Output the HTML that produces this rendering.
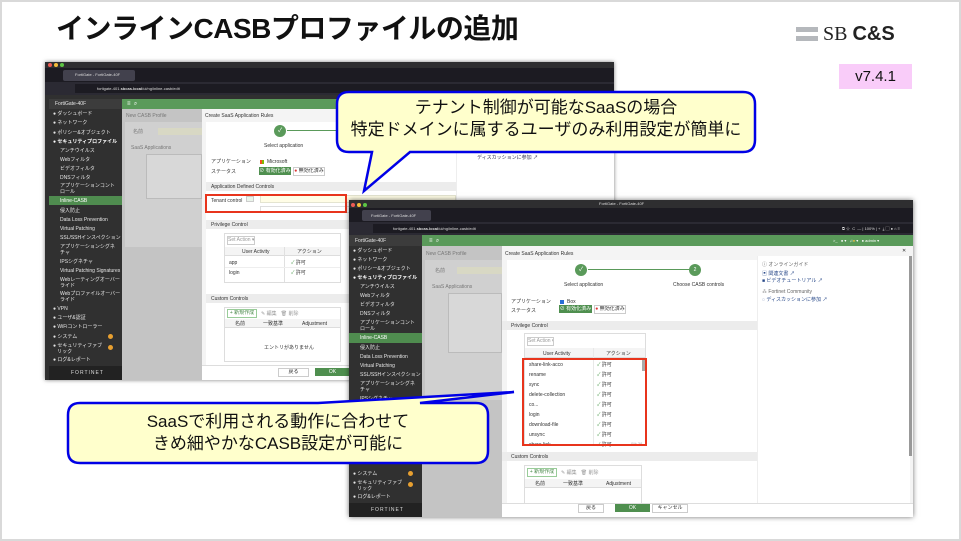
<!DOCTYPE html>
<html><head><meta charset="utf-8"><style>
*{margin:0;padding:0;box-sizing:border-box}
body{width:961px;height:541px;overflow:hidden;background:#fff;font-family:"Liberation Sans","Noto Sans CJK JP",sans-serif;position:relative}
.a{position:absolute}
.t{position:absolute;font-size:5px;line-height:6px;white-space:nowrap;color:#333}
.w{color:#ddd}
.sb .t{color:#e6e6e6}
.sec{position:absolute;background:#ececec}
.bx{position:absolute;border:1px solid #ddd;background:#fff}
.gbtn{position:absolute;background:#4f8f4f;color:#fff;font-size:5px;line-height:8px;text-align:center;white-space:nowrap;overflow:hidden}
.wbtn{position:absolute;background:#fff;border:1px solid #ccc;font-size:5px;line-height:7px;text-align:center;color:#333;white-space:nowrap;overflow:hidden}
</style></head><body>
<div class="a" style="left:0;top:0;width:961px;height:541px;border:2px solid #d9d9d9"></div>
<div class="a" style="left:56px;top:11px;font-size:28px;font-weight:bold;line-height:36px;color:#111;letter-spacing:-0.5px">インラインCASBプロファイルの追加</div>
<div class="a" style="left:796px;top:27px;width:22px;height:5px;background:#b5b8bc"></div>
<div class="a" style="left:796px;top:36px;width:22px;height:5px;background:#b5b8bc"></div>
<div class="a" style="left:823px;top:22px;font-family:'Liberation Serif',serif;font-size:20px;line-height:24px;color:#222">SB <b style="font-family:'Liberation Sans',sans-serif">C&amp;S</b></div>
<div class="a" style="left:839px;top:64px;width:73px;height:25px;background:#f9ccf9;font-size:15px;line-height:25px;text-align:center;color:#111">v7.4.1</div>

<!-- WINDOW 1 -->
<div class="a" style="left:45px;top:62px;width:569px;height:318px;background:#303030;box-shadow:0 0 4px rgba(0,0,0,.5);overflow:hidden">
 <div class="a" style="left:0;top:0;width:569px;height:6px;background:#2e2e30"></div>
 <div class="a" style="left:3px;top:1px;width:4px;height:4px;border-radius:50%;background:#ee5b55"></div>
 <div class="a" style="left:9px;top:1px;width:4px;height:4px;border-radius:50%;background:#f4bd3a"></div>
 <div class="a" style="left:15px;top:1px;width:4px;height:4px;border-radius:50%;background:#5dc644"></div>
 <div class="a" style="left:0;top:6px;width:569px;height:14px;background:#1c1b22"></div>
 <div class="a" style="left:18px;top:8px;width:72px;height:11px;background:#42414d;border-radius:2px"></div>
 <div class="t w" style="left:30px;top:10px;font-size:4px">FortiGate - FortiGate-40F</div>
 <div class="a" style="left:0;top:20px;width:569px;height:13px;background:#2b2a33"></div>
 <div class="a" style="left:30px;top:22px;width:539px;height:9px;background:#1c1b22"></div>
 <div class="t w" style="left:52px;top:24px;font-size:4px">fortigate-401.<b>sbcas.local</b>/ui/ng/inline-casb/edit</div>
 <div class="a" style="left:4px;top:37px;width:565px;height:10px;background:#5a9a5a"></div>
 <div class="t" style="left:82px;top:39px;color:#fff;font-size:6px">≡ &nbsp;⌕</div>
 <div class="a sb" style="left:4px;top:37px;width:73px;height:281px;background:#303030">
  <div class="a" style="left:0;top:0;width:73px;height:10px;background:#3c3c3c"></div>
  <div class="t" style="left:6px;top:2px">FortiGate-40F</div>
  <div class="t" style="left:4px;top:12px">● ダッシュボード</div>
  <div class="t" style="left:4px;top:21px">● ネットワーク</div>
  <div class="t" style="left:4px;top:31px">● ポリシー&amp;オブジェクト</div>
  <div class="t" style="left:4px;top:40px;font-weight:bold;color:#fff">● セキュリティプロファイル</div>
  <div class="t" style="left:11px;top:49px">アンチウイルス</div>
  <div class="t" style="left:11px;top:58px">Webフィルタ</div>
  <div class="t" style="left:11px;top:67px">ビデオフィルタ</div>
  <div class="t" style="left:11px;top:76px">DNSフィルタ</div>
  <div class="t" style="left:11px;top:84px">アプリケーションコント<br>ロール</div>
  <div class="a" style="left:0;top:97px;width:73px;height:9px;background:#4f8c4f"></div>
  <div class="t" style="left:11px;top:99px;color:#fff">Inline-CASB</div>
  <div class="t" style="left:11px;top:109px">侵入防止</div>
  <div class="t" style="left:11px;top:118px">Data Loss Prevention</div>
  <div class="t" style="left:11px;top:127px">Virtual Patching</div>
  <div class="t" style="left:11px;top:136px">SSL/SSHインスペクション</div>
  <div class="t" style="left:11px;top:145px">アプリケーションシグネ<br>チャ</div>
  <div class="t" style="left:11px;top:160px">IPSシグネチャ</div>
  <div class="t" style="left:11px;top:169px">Virtual Patching Signatures</div>
  <div class="t" style="left:11px;top:178px">Webレーティングオーバー<br>ライド</div>
  <div class="t" style="left:11px;top:192px">Webプロファイルオーバー<br>ライド</div>
  <div class="t" style="left:4px;top:207px">● VPN</div>
  <div class="t" style="left:4px;top:216px">● ユーザ&amp;認証</div>
  <div class="t" style="left:4px;top:225px">● WiFiコントローラー</div>
  <div class="t" style="left:4px;top:235px">● システム</div>
  <div class="a" style="left:59px;top:235px;width:5px;height:5px;border-radius:50%;background:#e8a030"></div>
  <div class="t" style="left:4px;top:244px">● セキュリティファブ<br>&nbsp;&nbsp;&nbsp;リック</div>
  <div class="a" style="left:59px;top:246px;width:5px;height:5px;border-radius:50%;background:#e8a030"></div>
  <div class="t" style="left:4px;top:258px">● ログ&amp;レポート</div>
  <div class="a" style="left:0;top:267px;width:73px;height:14px;background:#222"></div>
  <div class="t" style="left:22px;top:271px;color:#ddd;letter-spacing:1px">FORTINET</div>
 </div>
 <div class="a" style="left:77px;top:47px;width:80px;height:271px;background:#c4c4c4"></div>
 <div class="t" style="left:81px;top:51px;color:#777">New CASB Profile</div>
 <div class="a" style="left:80px;top:60px;width:77px;height:125px;background:#d0d0d0"></div>
 <div class="t" style="left:88px;top:67px;color:#777">名前</div>
 <div class="a" style="left:113px;top:66px;width:44px;height:7px;background:#d8d8c4"></div>
 <div class="t" style="left:86px;top:83px;color:#777">SaaS Applications</div>
 <div class="a" style="left:101px;top:92px;width:56px;height:45px;background:#d8d8d8;border:1px solid #bbb"></div>
 <div class="a" style="left:157px;top:47px;width:412px;height:271px;background:#f4f4f4"></div>
 <div class="t" style="left:160px;top:51px">Create SaaS Application Rules</div>
 <div class="a" style="left:161px;top:60px;width:250px;height:245px;background:#fff"></div>
 <div class="a" style="left:229px;top:63px;width:12px;height:12px;border-radius:50%;background:#5a9a5a;color:#fff;font-size:6px;line-height:12px;text-align:center">✓</div>
 <div class="a" style="left:242px;top:68px;width:60px;height:1px;background:#5a9a5a"></div>
 <div class="t" style="left:219px;top:81px">Select application</div>
 <div class="t" style="left:166px;top:97px">アプリケーション</div>
 <div class="a" style="left:215px;top:98px;width:4px;height:4px;background:linear-gradient(90deg,#f25022 50%,#7fba00 50%)"></div>
 <div class="t" style="left:222px;top:97px">Microsoft</div>
 <div class="t" style="left:166px;top:107px">ステータス</div>
 <div class="gbtn" style="left:214px;top:105px;width:32px">⊘ 有効化済み</div>
 <div class="wbtn" style="left:248px;top:105px;width:32px"><span style="color:#d33">●</span> 無効化済み</div>
 <div class="sec" style="left:161px;top:120px;width:250px;height:9px"></div>
 <div class="t" style="left:166px;top:122px">Application Defined Controls</div>
 <div class="t" style="left:166px;top:136px">Tenant control</div>
 <div class="a" style="left:201px;top:134px;width:8px;height:6px;border:1px solid #ccc;background:#eaf4ea"></div>
 <div class="a" style="left:215px;top:133px;width:196px;height:8px;background:#fffde6;border:1px solid #e4e4d0"></div>
 <div class="a" style="left:215px;top:144px;width:196px;height:7px;border:1px solid #ddd;font-size:5px;line-height:5px;text-align:center;color:#777">+</div>
 <div class="sec" style="left:161px;top:158px;width:250px;height:9px"></div>
 <div class="t" style="left:166px;top:160px">Privilege Control</div>
 <div class="bx" style="left:179px;top:171px;width:117px;height:50px"></div>
 <div class="wbtn" style="left:182px;top:174px;width:28px;color:#999">Set Action ▾</div>
 <div class="a" style="left:180px;top:185px;width:115px;height:9px;background:#f4f4f4;border-bottom:1px solid #ddd"></div>
 <div class="t" style="left:197px;top:187px">User Activity</div>
 <div class="a" style="left:239px;top:185px;width:1px;height:35px;background:#e0e0e0"></div>
 <div class="t" style="left:252px;top:187px">アクション</div>
 <div class="t" style="left:184px;top:198px">app</div><div class="t" style="left:246px;top:198px"><span style="color:#4a9a4a">✓</span> 許可</div>
 <div class="a" style="left:180px;top:205px;width:115px;height:1px;background:#eee"></div>
 <div class="t" style="left:184px;top:208px">login</div><div class="t" style="left:246px;top:208px"><span style="color:#4a9a4a">✓</span> 許可</div>
 <div class="sec" style="left:161px;top:232px;width:250px;height:9px"></div>
 <div class="t" style="left:166px;top:234px">Custom Controls</div>
 <div class="bx" style="left:179px;top:245px;width:117px;height:55px"></div>
 <div class="wbtn" style="left:182px;top:247px;width:30px;color:#4a8a4a;border-color:#9c9">+ 新規作成</div>
 <div class="t" style="left:216px;top:249px;color:#999">✎ 編集 &nbsp; 🗑 削除</div>
 <div class="a" style="left:180px;top:257px;width:115px;height:9px;background:#f4f4f4;border-bottom:1px solid #ddd"></div>
 <div class="t" style="left:190px;top:259px">名前</div><div class="t" style="left:218px;top:259px">一致基準</div><div class="t" style="left:257px;top:259px">Adjustment</div>
 <div class="t" style="left:219px;top:283px">エントリがありません</div>
 <div class="a" style="left:157px;top:303px;width:412px;height:15px;background:#fff;border-top:1px solid #ddd"></div>
 <div class="wbtn" style="left:233px;top:306px;width:31px">戻る</div>
 <div class="gbtn" style="left:270px;top:306px;width:35px">OK</div>
 <div class="a" style="left:411px;top:60px;width:158px;height:245px;background:#fff;border-left:1px solid #eee"></div>
 <div class="t" style="left:432px;top:93px;color:#335">ディスカッションに参加 ↗</div>
</div>
<div class="a" style="left:205px;top:194px;width:142px;height:19px;border:2px solid #e8341c"></div>

<!-- WINDOW 2 -->
<div class="a" style="left:349px;top:200px;width:564px;height:317px;background:#fff;box-shadow:0 0 5px rgba(0,0,0,.55);overflow:hidden">
 <div class="a" style="left:0;top:0;width:564px;height:8px;background:#2e2e30"></div>
 <div class="t w" style="left:250px;top:1px;font-size:4px">FortiGate - FortiGate-40F</div>
 <div class="a" style="left:2px;top:3px;width:4px;height:4px;border-radius:50%;background:#ee5b55"></div>
 <div class="a" style="left:8px;top:3px;width:4px;height:4px;border-radius:50%;background:#f4bd3a"></div>
 <div class="a" style="left:14px;top:3px;width:4px;height:4px;border-radius:50%;background:#5dc644"></div>
 <div class="a" style="left:0;top:8px;width:564px;height:14px;background:#1c1b22"></div>
 <div class="a" style="left:13px;top:10px;width:69px;height:11px;background:#42414d;border-radius:2px"></div>
 <div class="t w" style="left:22px;top:13px;font-size:4px">FortiGate - FortiGate-40F</div>
 <div class="a" style="left:0;top:22px;width:564px;height:13px;background:#2b2a33"></div>
 <div class="a" style="left:24px;top:24px;width:540px;height:9px;background:#1c1b22"></div>
 <div class="t w" style="left:44px;top:26px;font-size:4px">fortigate-401.<b>sbcas.local</b>/ui/ng/inline-casb/edit</div>
 <div class="t w" style="left:493px;top:26px;font-size:4px">⧉ ☆ &nbsp;C &nbsp;— | 100% | + &nbsp;⤓ ▢ ● ⌂ ≡</div>
 <div class="a" style="left:0;top:35px;width:564px;height:11px;background:#5a9a5a"></div>
 <div class="t" style="left:80px;top:38px;color:#fff;font-size:6px">≡ &nbsp;⌕</div>
 <div class="t" style="left:484px;top:38px;color:#fff;font-size:4px">&gt;_ &nbsp; ● ▾ &nbsp; ♫<span style="color:#f0c040">●</span> ▾ &nbsp; ● admin ▾</div>
 <div class="a sb" style="left:0;top:35px;width:73px;height:282px;background:#303030">
  <div class="a" style="left:0;top:0;width:73px;height:11px;background:#3c3c3c"></div>
  <div class="t" style="left:6px;top:3px">FortiGate-40F</div>
  <div class="t" style="left:4px;top:13px">● ダッシュボード</div>
  <div class="t" style="left:4px;top:22px">● ネットワーク</div>
  <div class="t" style="left:4px;top:31px">● ポリシー&amp;オブジェクト</div>
  <div class="t" style="left:4px;top:40px;font-weight:bold;color:#fff">● セキュリティプロファイル</div>
  <div class="t" style="left:11px;top:49px">アンチウイルス</div>
  <div class="t" style="left:11px;top:58px">Webフィルタ</div>
  <div class="t" style="left:11px;top:67px">ビデオフィルタ</div>
  <div class="t" style="left:11px;top:76px">DNSフィルタ</div>
  <div class="t" style="left:11px;top:85px">アプリケーションコント<br>ロール</div>
  <div class="a" style="left:0;top:98px;width:73px;height:10px;background:#4f8c4f"></div>
  <div class="t" style="left:11px;top:100px;color:#fff">Inline-CASB</div>
  <div class="t" style="left:11px;top:110px">侵入防止</div>
  <div class="t" style="left:11px;top:119px">Data Loss Prevention</div>
  <div class="t" style="left:11px;top:128px">Virtual Patching</div>
  <div class="t" style="left:11px;top:137px">SSL/SSHインスペクション</div>
  <div class="t" style="left:11px;top:146px">アプリケーションシグネ<br>チャ</div>
  <div class="t" style="left:11px;top:161px">IPSシグネチャ</div>
  <div class="t" style="left:4px;top:236px">● システム</div>
  <div class="a" style="left:59px;top:236px;width:5px;height:5px;border-radius:50%;background:#e8a030"></div>
  <div class="t" style="left:4px;top:245px">● セキュリティファブ<br>&nbsp;&nbsp;&nbsp;リック</div>
  <div class="a" style="left:59px;top:247px;width:5px;height:5px;border-radius:50%;background:#e8a030"></div>
  <div class="t" style="left:4px;top:259px">● ログ&amp;レポート</div>
  <div class="a" style="left:0;top:268px;width:73px;height:14px;background:#222"></div>
  <div class="t" style="left:22px;top:272px;color:#ddd;letter-spacing:1px">FORTINET</div>
 </div>
 <div class="a" style="left:73px;top:46px;width:80px;height:271px;background:#c4c4c4"></div>
 <div class="t" style="left:77px;top:51px;color:#777">New CASB Profile</div>
 <div class="a" style="left:76px;top:60px;width:77px;height:140px;background:#d0d0d0"></div>
 <div class="t" style="left:86px;top:68px;color:#777">名前</div>
 <div class="a" style="left:108px;top:67px;width:45px;height:7px;background:#d8d8c4"></div>
 <div class="t" style="left:83px;top:84px;color:#777">SaaS Applications</div>
 <div class="a" style="left:99px;top:93px;width:54px;height:60px;background:#d8d8d8;border:1px solid #bbb"></div>
 <div class="a" style="left:153px;top:46px;width:411px;height:271px;background:#f4f4f4"></div>
 <div class="t" style="left:156px;top:51px">Create SaaS Application Rules</div>
 <div class="a" style="left:158px;top:60px;width:250px;height:244px;background:#fff"></div>
 <div class="a" style="left:226px;top:64px;width:12px;height:12px;border-radius:50%;background:#5a9a5a;color:#fff;font-size:6px;line-height:12px;text-align:center">✓</div>
 <div class="a" style="left:239px;top:69px;width:101px;height:1px;background:#5a9a5a"></div>
 <div class="a" style="left:340px;top:64px;width:12px;height:12px;border-radius:50%;background:#5a9a5a;color:#fff;font-size:5px;line-height:12px;text-align:center">2</div>
 <div class="t" style="left:215px;top:82px">Select application</div>
 <div class="t" style="left:324px;top:82px">Choose CASB controls</div>
 <div class="t" style="left:162px;top:99px">アプリケーション</div>
 <div class="a" style="left:211px;top:100px;width:4px;height:4px;background:#2a6fd6"></div>
 <div class="t" style="left:218px;top:99px">Box</div>
 <div class="t" style="left:162px;top:108px">ステータス</div>
 <div class="gbtn" style="left:210px;top:105px;width:33px">⊘ 有効化済み</div>
 <div class="wbtn" style="left:245px;top:105px;width:32px"><span style="color:#d33">●</span> 無効化済み</div>
 <div class="sec" style="left:153px;top:121px;width:255px;height:9px"></div>
 <div class="t" style="left:162px;top:123px">Privilege Control</div>
 <div class="bx" style="left:175px;top:133px;width:122px;height:113px"></div>
 <div class="wbtn" style="left:178px;top:137px;width:27px;color:#999">Set Action ▾</div>
 <div class="a" style="left:176px;top:148px;width:120px;height:10px;background:#f4f4f4;border-bottom:1px solid #ddd"></div>
 <div class="t" style="left:194px;top:151px">User Activity</div>
 <div class="a" style="left:244px;top:148px;width:1px;height:98px;background:#e8e8e8"></div>
 <div class="t" style="left:257px;top:151px">アクション</div>
 <div class="a" style="left:293px;top:159px;width:3px;height:12px;background:#aaa"></div>
 <div class="t" style="left:180px;top:162px">share-link-acco</div><div class="t" style="left:248px;top:162px"><span style="color:#4a9a4a">✓</span> 許可</div>
 <div class="t" style="left:180px;top:172px">rename</div><div class="t" style="left:248px;top:172px"><span style="color:#4a9a4a">✓</span> 許可</div>
 <div class="t" style="left:180px;top:182px">sync</div><div class="t" style="left:248px;top:182px"><span style="color:#4a9a4a">✓</span> 許可</div>
 <div class="t" style="left:180px;top:192px">delete-collection</div><div class="t" style="left:248px;top:192px"><span style="color:#4a9a4a">✓</span> 許可</div>
 <div class="t" style="left:180px;top:202px">co...</div><div class="t" style="left:248px;top:202px"><span style="color:#4a9a4a">✓</span> 許可</div>
 <div class="t" style="left:180px;top:212px">login</div><div class="t" style="left:248px;top:212px"><span style="color:#4a9a4a">✓</span> 許可</div>
 <div class="t" style="left:180px;top:222px">download-file</div><div class="t" style="left:248px;top:222px"><span style="color:#4a9a4a">✓</span> 許可</div>
 <div class="t" style="left:180px;top:232px">unsync</div><div class="t" style="left:248px;top:232px"><span style="color:#4a9a4a">✓</span> 許可</div>
 <div class="t" style="left:180px;top:242px">share-link</div><div class="t" style="left:248px;top:242px"><span style="color:#4a9a4a">✓</span> 許可</div>
 <div class="t" style="left:282px;top:241px;color:#aaa;font-size:4px">0% 38</div>
 <div class="sec" style="left:153px;top:252px;width:255px;height:9px"></div>
 <div class="t" style="left:162px;top:254px">Custom Controls</div>
 <div class="bx" style="left:175px;top:265px;width:118px;height:45px"></div>
 <div class="wbtn" style="left:178px;top:268px;width:30px;color:#4a8a4a;border-color:#9c9">+ 新規作成</div>
 <div class="t" style="left:212px;top:270px;color:#999">✎ 編集 &nbsp; 🗑 削除</div>
 <div class="a" style="left:176px;top:279px;width:116px;height:9px;background:#f4f4f4;border-bottom:1px solid #ddd"></div>
 <div class="t" style="left:186px;top:281px">名前</div><div class="t" style="left:214px;top:281px">一致基準</div><div class="t" style="left:257px;top:281px">Adjustment</div>
 <div class="a" style="left:153px;top:303px;width:411px;height:14px;background:#fff;border-top:1px solid #ddd"></div>
 <div class="wbtn" style="left:229px;top:304px;width:26px">戻る</div>
 <div class="gbtn" style="left:266px;top:304px;width:35px">OK</div>
 <div class="wbtn" style="left:303px;top:304px;width:36px">キャンセル</div>
 <div class="a" style="left:408px;top:56px;width:153px;height:247px;background:#fff;border-left:1px solid #eee"></div>
 <div class="a" style="left:560px;top:56px;width:3px;height:200px;background:#999"></div>
 <div class="t" style="left:553px;top:48px;font-size:5px">✕</div>
 <div class="t" style="left:413px;top:62px;color:#666">ⓘ オンラインガイド</div>
 <div class="t" style="left:413px;top:71px;color:#2a4a8a">▣ 関連文書 ↗</div>
 <div class="t" style="left:413px;top:78px;color:#2a4a8a">■ ビデオチュートリアル ↗</div>
 <div class="t" style="left:413px;top:89px;color:#666">⁂ Fortinet Community</div>
 <div class="t" style="left:413px;top:97px;color:#2a4a8a">◌ ディスカッションに参加 ↗</div>
</div>
<div class="a" style="left:522px;top:358px;width:125px;height:88px;border:2px solid #e8341c"></div>

<svg class="a" style="left:0;top:0" width="961" height="541">
 <path d="M349 92 Q337 92 337 104 L337 140 Q337 152 349 152 L372 152 L364 191 L410 152 L743 152 Q755 152 755 140 L755 104 Q755 92 743 92 Z" fill="#ffffcc" stroke="#0000e6" stroke-width="2.5"/>
 <path d="M80 403 Q68 403 68 415 L68 451 Q68 463 80 463 L476 463 Q488 463 488 451 L488 415 Q488 403 476 403 L420 403 L514 392 L318 403 Z" fill="#ffffcc" stroke="#0000e6" stroke-width="2.5"/>
 <text x="546" y="113" text-anchor="middle" font-size="17" font-family="Liberation Sans,Noto Sans CJK JP,sans-serif" fill="#111">テナント制御が可能なSaaSの場合</text>
 <text x="546" y="135" text-anchor="middle" font-size="17" font-family="Liberation Sans,Noto Sans CJK JP,sans-serif" fill="#111">特定ドメインに属するユーザのみ利用設定が簡単に</text>
 <text x="278" y="427" text-anchor="middle" font-size="17" font-family="Liberation Sans,Noto Sans CJK JP,sans-serif" fill="#111">SaaSで利用される動作に合わせて</text>
 <text x="278" y="449" text-anchor="middle" font-size="17" font-family="Liberation Sans,Noto Sans CJK JP,sans-serif" fill="#111">きめ細やかなCASB設定が可能に</text>
</svg>
</body></html>
